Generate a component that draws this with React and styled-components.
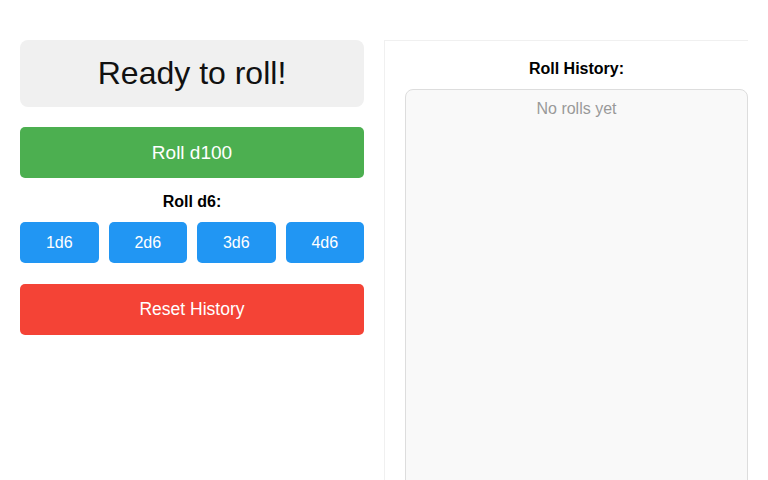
import React, { useState } from 'react';
import styled, { createGlobalStyle } from 'styled-components';

const GlobalStyle = createGlobalStyle`
  html, body {
    margin: 0;
    padding: 0;
    background: #fff;
    font-family: "Liberation Sans", Arial, sans-serif;
    overflow: hidden;
  }
`;

const Page = styled.div`
  display: grid;
  grid-template-columns: 344px 1fr;
  gap: 20px;
  padding: 40px 20px 0 20px;
  height: 480px;
  box-sizing: border-box;
  overflow: hidden;
`;

const Controls = styled.div`
  display: flex;
  flex-direction: column;
`;

const Status = styled.div`
  background: #f0f0f0;
  border-radius: 8px;
  height: 67px;
  display: flex;
  align-items: center;
  justify-content: center;
  font-size: 32px;
  color: #111;
`;

const BigButton = styled.button`
  height: 51px;
  margin-top: ${(p) => p.$gap || 20}px;
  border: none;
  border-radius: 5px;
  background: ${(p) => p.$bg};
  color: #fff;
  font-family: inherit;
  font-size: ${(p) => p.$size || 18}px;
  cursor: pointer;
`;

const SectionLabel = styled.div`
  font-weight: bold;
  font-size: 16px;
  line-height: 18px;
  text-align: center;
  margin: 15px 0 11px;
  color: #000;
`;

const DiceRow = styled.div`
  display: grid;
  grid-template-columns: repeat(4, 1fr);
  gap: 10px;
`;

const DiceButton = styled.button`
  height: 41px;
  border: none;
  border-radius: 5px;
  background: #2196f3;
  color: #fff;
  font-family: inherit;
  font-size: 16px;
  cursor: pointer;
`;

const HistoryPanel = styled.div`
  border-top: 1px solid #f0f0f0;
  border-left: 1px solid #f0f0f0;
  padding: 19px 0 0 20px;
  display: flex;
  flex-direction: column;
`;

const HistoryTitle = styled.div`
  font-weight: bold;
  font-size: 16px;
  line-height: 18px;
  text-align: center;
  margin-bottom: 11px;
  color: #000;
`;

const HistoryBox = styled.div`
  flex: 1;
  min-height: 420px;
  background: #f9f9f9;
  border: 1px solid #ddd;
  border-radius: 8px;
  padding: 10px;
`;

const Empty = styled.div`
  color: #999;
  font-size: 16px;
  line-height: 18px;
  text-align: center;
`;

export default function App() {
  const [status, setStatus] = useState('Ready to roll!');
  const [history, setHistory] = useState([]);

  const roll = (count, sides) => {
    const rolls = Array.from({ length: count }, () => 1 + Math.floor(Math.random() * sides));
    const total = rolls.reduce((a, b) => a + b, 0);
    const label = count > 1 ? `${count}d${sides}` : `d${sides}`;
    setStatus(`${label}: ${total}`);
    setHistory((h) => [`${label}: ${total}`, ...h]);
  };

  return (
    <>
      <GlobalStyle />
      <Page>
        <Controls>
          <Status>{status}</Status>
          <BigButton $bg="#4caf50" $size={19} onClick={() => roll(1, 100)}>Roll d100</BigButton>
          <SectionLabel>Roll d6:</SectionLabel>
          <DiceRow>
            {[1, 2, 3, 4].map((n) => (
              <DiceButton key={n} onClick={() => roll(n, 6)}>{n}d6</DiceButton>
            ))}
          </DiceRow>
          <BigButton
            $bg="#f44336"
            $size={17.5}
            $gap={21}
            onClick={() => { setHistory([]); setStatus('Ready to roll!'); }}
          >
            Reset History
          </BigButton>
        </Controls>
        <HistoryPanel>
          <HistoryTitle>Roll History:</HistoryTitle>
          <HistoryBox>
            {history.length === 0 ? (
              <Empty>No rolls yet</Empty>
            ) : (
              history.map((h, i) => <Empty key={i}>{h}</Empty>)
            )}
          </HistoryBox>
        </HistoryPanel>
      </Page>
    </>
  );
}
